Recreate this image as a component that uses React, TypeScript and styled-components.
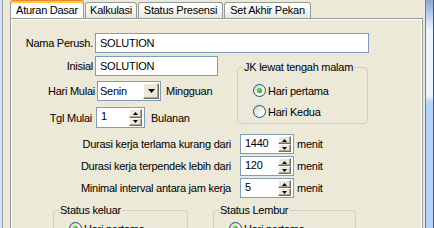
import React from "react";
import styled, { createGlobalStyle, css } from "styled-components";

// Global
const GlobalStyle = createGlobalStyle`
  html, body {
    margin: 0;
    padding: 0;
    background: #ece9d8;
  }
  body {
    font-family: "Liberation Sans", Arial, sans-serif;
    font-size: 11px;
    letter-spacing: -0.25px;
    color: #000;
  }
  * {
    box-sizing: border-box;
  }
`;

// Window frame
const Window = styled.div`
  display: flex;
  width: 434px;
  height: 228px;
  overflow: hidden;
  background: #ece9d8;
`;

const LeftEdge = styled.div`
  width: 3px;
  background: #d6e2f4;
  border-right: 1px solid #8a9ab4;
`;

const RightEdge = styled.div`
  width: 9px;
  border-left: 1px solid #6f7f99;
  border-right: 1px solid #40557a;
  background: linear-gradient(
    to bottom,
    #8aa4d4 0px,
    #c4d6f2 18px,
    #eef4fd 30px,
    #eef4fd 96px,
    #b6d4f6 102px,
    #b6d4f6 100%
  );
`;

const Client = styled.div`
  flex: 1;
  display: flex;
  flex-direction: column;
  padding: 0 2px 0 7px;
`;

// Tabs
const TabStrip = styled.div`
  display: flex;
  align-items: flex-end;
  gap: 1px;
  height: 20px;
`;

const Tab = styled.div<{ $active?: boolean; $width: number }>`
  width: ${(p) => p.$width}px;
  border: 1px solid #919b9c;
  border-bottom: none;
  border-radius: 3px 3px 0 0;
  text-align: center;
  white-space: nowrap;
  ${({ $active }) =>
    $active
      ? css`
          height: 18px;
          line-height: 14px;
          padding-top: 2px;
          border-top-color: #e68b2c;
          box-shadow: inset 0 2px 0 #ffc73c;
          background: #fcfcfe;
        `
      : css`
          height: 16px;
          line-height: 15px;
          background: linear-gradient(to bottom, #ffffff, #f4f3ee 60%, #e6e5dd);
        `}
`;

const Panel = styled.div`
  flex: 1;
  border: 1px solid #919b9c;
  box-shadow: inset 0 0 0 1px #ffffff;
  background: #ece9d8;
`;

const Form = styled.div`
  padding-top: 14px;
`;

// Field rows
const FieldRow = styled.div<{ $top?: number }>`
  display: flex;
  align-items: center;
  gap: 2px;
  margin-top: ${(p) => p.$top ?? 0}px;
`;

const Label = styled.span<{ $width: number }>`
  flex: none;
  width: ${(p) => p.$width}px;
  text-align: right;
  white-space: nowrap;
`;

const Suffix = styled.span<{ $gap?: number }>`
  margin-left: ${(p) => p.$gap ?? 3}px;
  white-space: nowrap;
`;

const TextBox = styled.input<{ $width: number }>`
  width: ${(p) => p.$width}px;
  height: 20px;
  border: 1px solid #7f9db9;
  background: #fff;
  padding: 0 4px;
  margin: 0;
  font: inherit;
  letter-spacing: inherit;
  color: #000;
  outline: none;
`;

const Split = styled.div`
  display: flex;
  align-items: flex-start;
  margin-top: 3px;
`;

const Column = styled.div`
  width: 226px;
  display: flex;
  flex-direction: column;
`;

// Combo box
const Combo = styled.div<{ $width: number }>`
  width: ${(p) => p.$width}px;
  height: 20px;
  display: flex;
  align-items: stretch;
  border: 1px solid #7f9db9;
  background: #fff;
`;

const ComboText = styled.span`
  flex: 1;
  padding-left: 2px;
  line-height: 18px;
`;

const ClassicButton = styled.div`
  display: flex;
  align-items: center;
  justify-content: center;
  background: #ece9d8;
  border: 1px solid;
  border-color: #ffffff #716f64 #716f64 #ffffff;
  box-shadow: inset -1px -1px 0 #aca899;
`;

const ComboButton = styled(ClassicButton)`
  width: 16px;
  margin: 1px;
`;

// Spin edit
const Spin = styled.div<{ $width: number; $height?: number }>`
  width: ${(p) => p.$width}px;
  height: ${(p) => p.$height ?? 20}px;
  display: flex;
  align-items: stretch;
  border: 1px solid #7f9db9;
  background: #fff;
`;

const SpinText = styled.span`
  flex: 1;
  padding-left: 4px;
  line-height: 16px;
`;

const SpinButtons = styled.div`
  width: 13px;
  margin: 1px 2px 1px 0;
  display: flex;
  flex-direction: column;
`;

const SpinButton = styled(ClassicButton)`
  flex: 1;
`;

// Group boxes
const GroupBox = styled.fieldset<{ $width: number; $top?: number; $left?: number }>`
  width: ${(p) => p.$width}px;
  margin: ${(p) => p.$top ?? 0}px 0 0 ${(p) => p.$left ?? 0}px;
  padding: 0;
  border: 1px solid #d0d0bf;
  border-radius: 4px;
  min-width: 0;
`;

const Legend = styled.legend`
  margin-left: 5px;
  padding: 0 1px;
  line-height: 13px;
  white-space: nowrap;
`;

const RadioList = styled.div<{ $top: number }>`
  display: flex;
  flex-direction: column;
  padding: ${(p) => p.$top}px 0 1px 15px;
`;

const RadioRow = styled.label`
  display: flex;
  align-items: center;
  gap: 2px;
  height: 21px;
  white-space: nowrap;
`;

const RadioCircle = styled.span<{ $checked?: boolean }>`
  width: 13px;
  height: 13px;
  flex: none;
  border-radius: 50%;
  border: 1px solid #1c5180;
  background: linear-gradient(135deg, #d4d4cc 0%, #f4f4f0 60%, #ffffff 100%);
  display: flex;
  align-items: center;
  justify-content: center;
  &::after {
    content: "";
    display: ${(p) => (p.$checked ? "block" : "none")};
    width: 5px;
    height: 5px;
    border-radius: 50%;
    background: radial-gradient(circle at 40% 40%, #6ee26e, #21a121 70%);
  }
`;

// Duration rows
const DurationList = styled.div`
  display: flex;
  flex-direction: column;
  gap: 2px;
  margin-top: 6px;
`;

const DurationRow = styled.div`
  display: flex;
  align-items: center;
  height: 20px;
`;

const BottomGroups = styled.div`
  display: flex;
  gap: 25px;
  margin-top: 6px;
  padding-left: 42px;
`;

// Icons
const ArrowDown = ({ size = 7 }: { size?: number }) => (
  <svg width={size} height={Math.ceil(size / 2)} viewBox={`0 0 ${size} ${Math.ceil(size / 2)}`}>
    <polygon points={`0,0 ${size},0 ${size / 2},${Math.ceil(size / 2)}`} fill="#000" />
  </svg>
);

const ArrowUp = ({ size = 5 }: { size?: number }) => (
  <svg width={size} height={Math.ceil(size / 2)} viewBox={`0 0 ${size} ${Math.ceil(size / 2)}`}>
    <polygon points={`0,${Math.ceil(size / 2)} ${size},${Math.ceil(size / 2)} ${size / 2},0`} fill="#000" />
  </svg>
);

// Small composed parts
const SpinEdit = ({ value, width, height }: { value: string; width: number; height?: number }) => (
  <Spin $width={width} $height={height}>
    <SpinText>{value}</SpinText>
    <SpinButtons>
      <SpinButton>
        <ArrowUp />
      </SpinButton>
      <SpinButton>
        <ArrowDown size={5} />
      </SpinButton>
    </SpinButtons>
  </Spin>
);

const Radio = ({ label, checked }: { label: string; checked?: boolean }) => (
  <RadioRow>
    <RadioCircle $checked={checked} />
    {label}
  </RadioRow>
);

const tabs = [
  { label: "Aturan Dasar", width: 74 },
  { label: "Kalkulasi", width: 52 },
  { label: "Status Presensi", width: 85 },
  { label: "Set Akhir Pekan", width: 87 },
];

const durations = [
  { label: "Durasi kerja terlama kurang dari", value: "1440" },
  { label: "Durasi kerja terpendek lebih dari", value: "120" },
  { label: "Minimal interval antara jam kerja", value: "5" },
];

export default function App() {
  return (
    <>
      <GlobalStyle />
      <Window>
        <LeftEdge />
        <Client>
          <TabStrip>
            {tabs.map((t, i) => (
              <Tab key={t.label} $active={i === 0} $width={t.width}>
                {t.label}
              </Tab>
            ))}
          </TabStrip>
          <Panel>
            <Form>
              <FieldRow>
                <Label $width={82}>Nama Perush.</Label>
                <TextBox $width={274} value="SOLUTION" readOnly />
              </FieldRow>

              <Split>
                <Column>
                  <FieldRow>
                    <Label $width={82}>Inisial</Label>
                    <TextBox $width={123} value="SOLUTION" readOnly />
                  </FieldRow>
                  <FieldRow $top={5}>
                    <Label $width={84}>Hari Mulai</Label>
                    <Combo $width={64}>
                      <ComboText>Senin</ComboText>
                      <ComboButton>
                        <ArrowDown />
                      </ComboButton>
                    </Combo>
                    <Suffix>Mingguan</Suffix>
                  </FieldRow>
                  <FieldRow $top={6}>
                    <Label $width={81}>Tgl Mulai</Label>
                    <Suffix $gap={2}>
                      <SpinEdit value="1" width={49} height={21} />
                    </Suffix>
                    <Suffix $gap={4}>Bulanan</Suffix>
                  </FieldRow>
                </Column>

                <GroupBox $width={131} $top={5}>
                  <Legend>JK lewat tengah malam</Legend>
                  <RadioList $top={6}>
                    <Radio label="Hari pertama" checked />
                    <Radio label="Hari Kedua" />
                  </RadioList>
                </GroupBox>
              </Split>

              <DurationList>
                {durations.map((d) => (
                  <DurationRow key={d.label}>
                    <Label $width={220}>{d.label}</Label>
                    <Suffix $gap={9}>
                      <SpinEdit value={d.value} width={54} />
                    </Suffix>
                    <Suffix $gap={3}>menit</Suffix>
                  </DurationRow>
                ))}
              </DurationList>

              <BottomGroups>
                <GroupBox $width={135}>
                  <Legend>Status keluar</Legend>
                  <RadioList $top={1}>
                    <Radio label="Hari pertama" checked />
                    <Radio label="Hari Kedua" />
                  </RadioList>
                </GroupBox>
                <GroupBox $width={143}>
                  <Legend>Status Lembur</Legend>
                  <RadioList $top={1}>
                    <Radio label="Hari pertama" checked />
                    <Radio label="Hari Kedua" />
                  </RadioList>
                </GroupBox>
              </BottomGroups>
            </Form>
          </Panel>
        </Client>
        <RightEdge />
      </Window>
    </>
  );
}
